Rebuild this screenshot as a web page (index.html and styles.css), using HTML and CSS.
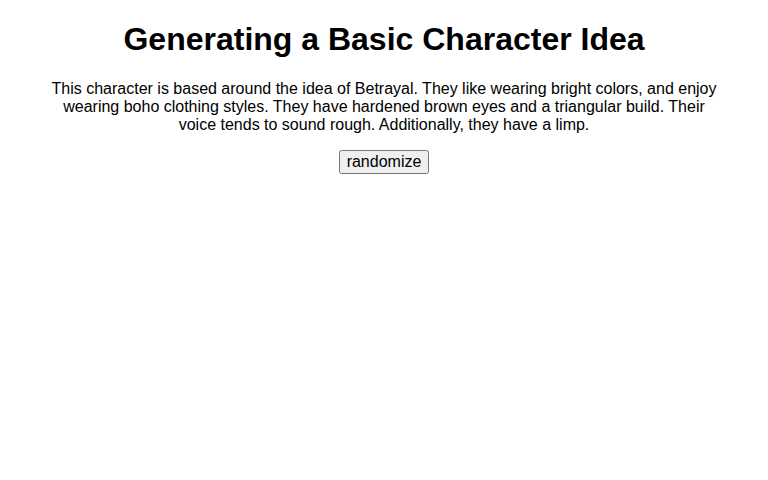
FILE: index.html
```html
<!DOCTYPE html>
<html>
<head>
<meta charset="utf-8">
<link rel="stylesheet" href="styles.css">
</head>
<body>
<main class="page">
<h1 class="title">Generating a Basic Character Idea</h1>
<p class="desc">This character is based around the idea of Betrayal. They like wearing bright colors, and enjoy wearing boho clothing styles. They have hardened brown eyes and a triangular build. Their voice tends to sound rough. Additionally, they have a limp.</p>
<button class="btn">randomize</button>
</main>
</body>
</html>
```
FILE: styles.css
```css
body {
  margin: 0;
  font-family: "Liberation Sans", Arial, sans-serif;
  color: #000;
  background: #fff;
}
.page {
  text-align: center;
  padding: 0 48px;
}
.title {
  font-size: 32px;
  font-weight: bold;
  margin: 21.44px 0;
}
.desc {
  font-size: 16px;
  margin: 16px 0;
}
.btn {
  font-family: "Liberation Sans", Arial, sans-serif;
  font-size: 16px;
  padding: 1px 6px;
}
```
